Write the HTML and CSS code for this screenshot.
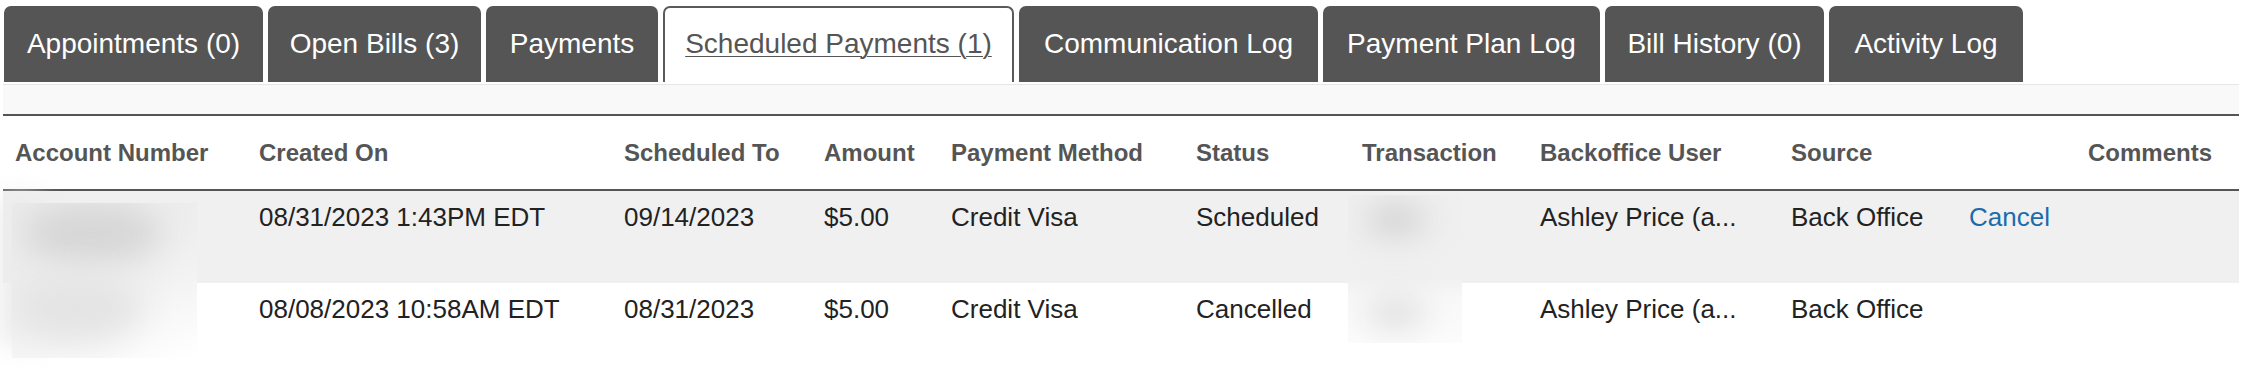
FILE: index.html
```html
<!DOCTYPE html>
<html>
<head>
<meta charset="utf-8">
<link rel="stylesheet" href="styles.css">
</head>
<body>
<div class="page">
  <ul class="tabs">
    <li class="tab t-appt">Appointments (0)</li>
    <li class="tab t-bills">Open Bills (3)</li>
    <li class="tab t-pay">Payments</li>
    <li class="tab tab-active t-sched"><a href="#">Scheduled Payments (1)</a></li>
    <li class="tab t-comm">Communication Log</li>
    <li class="tab t-plan">Payment Plan Log</li>
    <li class="tab t-hist">Bill History (0)</li>
    <li class="tab t-act">Activity Log</li>
  </ul>
  <div class="bar"></div>
  <div class="table-wrap">
    <table class="grid">
      <colgroup>
        <col class="c-acct"><col class="c-created"><col class="c-sched"><col class="c-amt"><col class="c-method"><col class="c-status"><col class="c-txn"><col class="c-user"><col class="c-source"><col class="c-action"><col class="c-comments">
      </colgroup>
      <thead>
        <tr>
          <th>Account Number</th>
          <th>Created On</th>
          <th>Scheduled To</th>
          <th>Amount</th>
          <th>Payment Method</th>
          <th>Status</th>
          <th>Transaction</th>
          <th>Backoffice User</th>
          <th>Source</th>
          <th></th>
          <th>Comments</th>
        </tr>
      </thead>
      <tbody>
        <tr class="row-alt">
          <td></td>
          <td>08/31/2023 1:43PM EDT</td>
          <td>09/14/2023</td>
          <td>$5.00</td>
          <td>Credit Visa</td>
          <td>Scheduled</td>
          <td></td>
          <td>Ashley Price (a...</td>
          <td>Back Office</td>
          <td><a class="link" href="#">Cancel</a></td>
          <td></td>
        </tr>
        <tr>
          <td></td>
          <td>08/08/2023 10:58AM EDT</td>
          <td>08/31/2023</td>
          <td>$5.00</td>
          <td>Credit Visa</td>
          <td>Cancelled</td>
          <td></td>
          <td>Ashley Price (a...</td>
          <td>Back Office</td>
          <td></td>
          <td></td>
        </tr>
      </tbody>
    </table>
    <div class="smear"></div>
    <div class="redact redact-acct"><span class="spot spot-a1"></span><span class="spot spot-a2"></span></div>
    <div class="redact redact-txn"><span class="spot spot-t1"></span><span class="spot spot-t2"></span></div>
  </div>
</div>
</body>
</html>
```
FILE: styles.css
```css
* { box-sizing: border-box; }
html, body { margin: 0; padding: 0; background: #fff; }
body { font-family: "Liberation Sans", Arial, Helvetica, sans-serif; }

.page {
  width: 2246px;
  padding: 0 7px 0 3px;
}

.tabs {
  list-style: none;
  margin: 0;
  padding: 6px 0 0 1px;
  display: flex;
  gap: 5px;
}
.tab {
  height: 76px;
  line-height: 76px;
  background: #555555;
  color: #ffffff;
  font-size: 28px;
  text-align: center;
  white-space: nowrap;
  border-radius: 7px 7px 0 0;
}
.tab-active {
  background: #ffffff;
  border: 2px solid #5a5a5a;
  border-bottom: none;
  line-height: 72px;
}
.tab-active a { color: #555555; text-decoration: underline; text-underline-offset: 3px; text-decoration-thickness: 1px; }
.t-appt { width: 259px; }
.t-bills { width: 213px; }
.t-pay { width: 172px; }
.t-sched { width: 351px; }
.t-comm { width: 299px; }
.t-plan { width: 277px; }
.t-hist { width: 219px; }
.t-act { width: 194px; }

.bar {
  margin-top: 2px;
  height: 32px;
  background: #f9f9f9;
  border-top: 1px solid #e6e6e6;
  border-bottom: 2px solid #555555;
}

.table-wrap { position: relative; }
.grid {
  width: 2236px;
  border-collapse: collapse;
  table-layout: fixed;
}
.c-acct { width: 244px; }
.c-created { width: 365px; }
.c-sched { width: 200px; }
.c-amt { width: 127px; }
.c-method { width: 245px; }
.c-status { width: 166px; }
.c-txn { width: 178px; }
.c-user { width: 251px; }
.c-source { width: 178px; }
.c-action { width: 119px; }
.c-comments { width: 163px; }

.grid th {
  height: 74px;
  padding: 0 12px;
  text-align: left;
  vertical-align: middle;
  font-size: 24px;
  font-weight: bold;
  color: #555555;
  white-space: nowrap;
  border-bottom: 2px solid #555555;
}
.grid td {
  height: 93px;
  padding: 11px 12px 0 12px;
  vertical-align: top;
  font-size: 26px;
  color: #222222;
  white-space: nowrap;
  overflow: hidden;
}
.row-alt td { background: #f0f0f0; }
.link { color: #1a6cab; text-decoration: none; }

.smear {
  position: absolute;
  left: -3px;
  top: 80px;
  width: 40px;
  height: 150px;
  background: #ebebeb;
  filter: blur(12px);
}
.redact {
  position: absolute;
  overflow: hidden;
}
.redact-acct {
  left: 9px;
  top: 87px;
  width: 185px;
  height: 155px;
  background: linear-gradient(160deg, #ebebeb 0%, #eeeeee 40%, #f2f2f2 60%, #f9f9f9 80%, #ffffff 100%);
}
.redact-txn {
  left: 1345px;
  top: 79px;
  width: 114px;
  height: 148px;
  background: linear-gradient(180deg, #efefef 0%, #f0f0f0 55%, #f8f8f8 70%, #fcfcfc 100%);
}
.spot {
  position: absolute;
  border-radius: 50%;
  filter: blur(16px);
}
.spot-a1 { left: 10px; top: 0px; width: 140px; height: 60px; background: #d6d6d6; }
.spot-a2 { left: 0px; top: 70px; width: 130px; height: 70px; background: #e4e4e4; }
.spot-t1 { left: 18px; top: 10px; width: 60px; height: 30px; background: #cfcfcf; }
.spot-t2 { left: 18px; top: 103px; width: 60px; height: 30px; background: #dcdcdc; }
```
